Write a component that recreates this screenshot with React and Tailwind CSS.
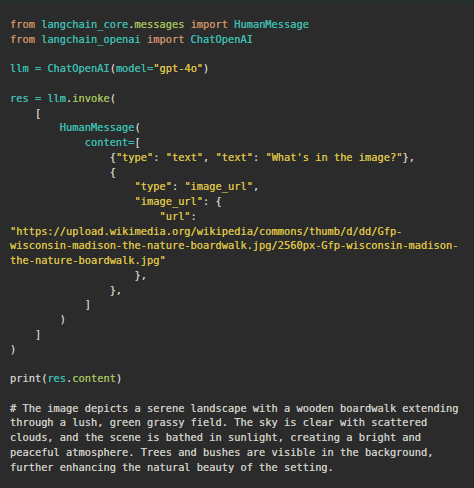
import React from 'react';

const C = {
  kw: 'text-[#cc9066]',
  id: 'text-[#3dbcae]',
  fn: 'text-[#a3c05a]',
  str: 'text-[#dcc246]',
  p: 'text-[#c8c8c4]',
  cm: 'text-[#cbcbc3]',
};

const lines = [
  [['from', 'kw'], [' langchain_core', 'id'], ['.', 'p'], ['messages', 'fn'], [' import', 'kw'], [' HumanMessage', 'id']],
  [['from', 'kw'], [' langchain_openai', 'id'], [' import', 'kw'], [' ChatOpenAI', 'id']],
  [],
  [['llm', 'id'], [' = ', 'id'], ['ChatOpenAI', 'id'], ['(', 'p'], ['model', 'id'], ['=', 'id'], ['"gpt-4o"', 'str'], [')', 'p']],
  [],
  [['res', 'id'], [' = ', 'id'], ['llm', 'id'], ['.', 'p'], ['invoke', 'fn'], ['(', 'p']],
  [['    [', 'p']],
  [['        HumanMessage', 'id'], ['(', 'p']],
  [['            content', 'id'], ['=', 'id'], ['[', 'p']],
  [['                {', 'p'], ['"type"', 'str'], [': ', 'p'], ['"text"', 'str'], [', ', 'p'], ['"text"', 'str'], [': ', 'p'], ['"What\'s in the image?"', 'str'], ['},', 'p']],
  [['                {', 'p']],
  [['                    "type"', 'str'], [': ', 'p'], ['"image_url"', 'str'], [',', 'p']],
  [['                    "image_url"', 'str'], [': {', 'p']],
  [['                        "url"', 'str'], [':', 'p']],
  [['"https://upload.wikimedia.org/wikipedia/commons/thumb/d/dd/Gfp-', 'str']],
  [['wisconsin-madison-the-nature-boardwalk.jpg/2560px-Gfp-wisconsin-madison-', 'str']],
  [['the-nature-boardwalk.jpg"', 'str']],
  [['                    },', 'p']],
  [['                },', 'p']],
  [['            ]', 'p']],
  [['        )', 'p']],
  [['    ]', 'p']],
  [[')', 'p']],
  [],
  [['print', 'p'], ['(', 'p'], ['res', 'id'], ['.', 'p'], ['content', 'fn'], [')', 'p']],
  [],
  [['# The image depicts a serene landscape with a wooden boardwalk extending', 'cm']],
  [['through a lush, green grassy field. The sky is clear with scattered', 'cm']],
  [['clouds, and the scene is bathed in sunlight, creating a bright and', 'cm']],
  [['peaceful atmosphere. Trees and bushes are visible in the background,', 'cm']],
  [['further enhancing the natural beauty of the setting.', 'cm']],
];

export default function App() {
  return (
    <div className="w-[474px] h-[488px] bg-[#2b2b2b] overflow-hidden flex flex-col">
      <div className="h-[4px] bg-[#26302a] shrink-0" />
      <pre className="pl-[10px] pt-[13px] m-0 font-['DejaVu_Sans_Mono',monospace] text-[10.35px] leading-[14.75px] whitespace-pre [text-shadow:0_0_0.4px_currentColor]">
        {lines.map((line, i) => (
          <div key={i} className="h-[14.75px]">
            {line.map(([t, k], j) => (
              <span key={j} className={C[k]}>{t}</span>
            ))}
          </div>
        ))}
      </pre>
    </div>
  );
}
